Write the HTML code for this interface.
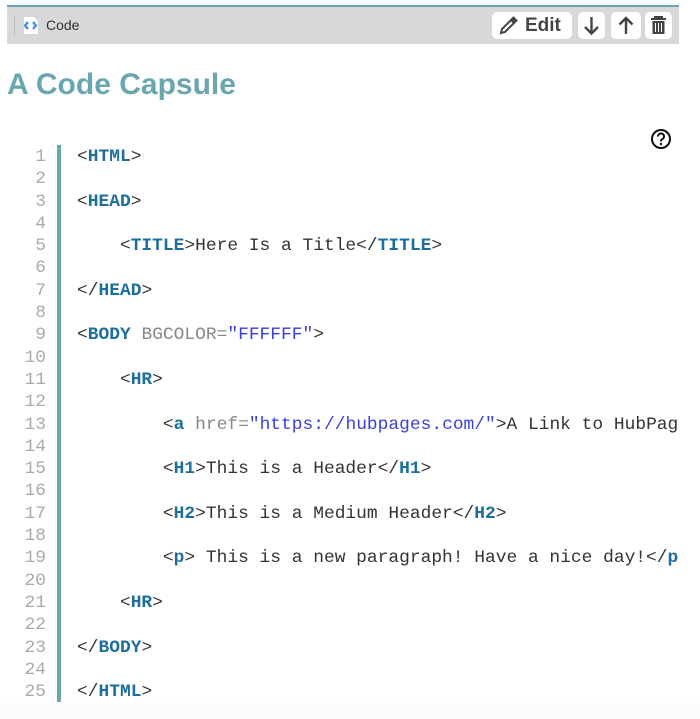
<!DOCTYPE html>
<html><head><meta charset="utf-8"><style>
body{margin:0;width:700px;height:719px;background:#fff;overflow:hidden;position:relative;font-family:"Liberation Sans",sans-serif}
.top{position:absolute;left:7px;top:5px;width:672px;height:2px;background:#6aa6b0}
.bar{position:absolute;left:7px;top:7px;width:672px;height:37px;background:#d8d8d8}
.btn{position:absolute;top:5px;height:27px;background:#fff;border-radius:5px}
h1{position:absolute;left:7px;top:68px;margin:0;font-size:30px;font-weight:bold;color:#6aa6b0}
.code{position:absolute;left:0;top:146px;width:700px;height:560px;font-family:"Liberation Mono",monospace;font-size:17.9px;line-height:22.3px;color:#333}
.ln{position:absolute;left:0;top:0;width:46px;text-align:right;color:#aaa;white-space:pre}
.tx{position:absolute;left:77px;top:0;width:602px;overflow:hidden;white-space:pre}
.t{color:#1c6f9c;font-weight:bold}.a{color:#888}.s{color:#3a3fe0}
.vl{position:absolute;left:57px;top:145px;width:4px;height:557px;background:#6aa6b0}
.fade{position:absolute;left:0;top:703px;width:700px;height:16px;background:#fbfcfc}
</style></head><body>
<div class="top"></div>
<div class="bar">
 <div style="position:absolute;left:7px;top:9px;width:1px;height:20px;background:#bbb"></div>
 <svg style="position:absolute;left:15px;top:9px" width="18" height="19" viewBox="0 0 18 19"><path d="M2 1h10l4 4v13H2z" fill="#fff"/><path d="M6 6l-3 3.5 3 3.5M11 6l3 3.5-3 3.5" stroke="#3a8fe0" stroke-width="2.2" fill="none"/></svg>
 <span style="position:absolute;left:39px;top:10px;font-size:14px;color:#333">Code</span>
 <div class="btn" style="left:485px;width:80px"><svg style="position:absolute;left:6px;top:4px" width="20" height="20" viewBox="0 0 20 20"><path d="M3 17l1-4L13 4l3 3-9 9z M14 3l1.5-1.5 3 3L17 6z" fill="none" stroke="#444" stroke-width="2"/></svg><span style="position:absolute;left:33px;top:3px;font-size:19px;font-weight:bold;color:#444">Edit</span></div>
 <div class="btn" style="left:571px;width:27px"><svg width="27" height="27" viewBox="0 0 27 27"><path d="M13.5 5v16M7 15l6.5 6.5L20 15" stroke="#444" stroke-width="2.4" fill="none"/></svg></div>
 <div class="btn" style="left:604px;width:30px"><svg width="30" height="27" viewBox="0 0 30 27"><path d="M15 22V6M8.5 12.5L15 6l6.5 6.5" stroke="#444" stroke-width="2.4" fill="none"/></svg></div>
 <div class="btn" style="left:638px;width:27px"><svg width="27" height="27" viewBox="0 0 27 27"><path d="M6 7h15M10 7V5h7v2" stroke="#444" stroke-width="2" fill="none"/><rect x="7.5" y="9" width="12" height="13" fill="#444"/><path d="M10.5 11v9M13.5 11v9M16.5 11v9" stroke="#fff" stroke-width="1"/></svg></div>
</div>
<h1>A Code Capsule</h1>
<svg style="position:absolute;left:650px;top:128px" width="22" height="22" viewBox="0 0 22 22"><circle cx="11" cy="11" r="9" fill="none" stroke="#111" stroke-width="2"/><path d="M8 8.5a3 3 0 1 1 4 2.8c-1 .4-1 1-1 2.2" fill="none" stroke="#111" stroke-width="2"/><circle cx="11" cy="16" r="1.2" fill="#111"/></svg>
<div class="fade"></div>
<div class="vl"></div>
<div class="code"><div class="ln">1
2
3
4
5
6
7
8
9
10
11
12
13
14
15
16
17
18
19
20
21
22
23
24
25</div><div class="tx">&lt;<span class="t">HTML</span>&gt;

&lt;<span class="t">HEAD</span>&gt;

    &lt;<span class="t">TITLE</span>&gt;Here Is a Title&lt;/<span class="t">TITLE</span>&gt;

&lt;/<span class="t">HEAD</span>&gt;

&lt;<span class="t">BODY</span> <span class="a">BGCOLOR=</span><span class="s">"FFFFFF"</span>&gt;

    &lt;<span class="t">HR</span>&gt;

        &lt;<span class="t">a</span> <span class="a">href=</span><span class="s">"https://hubpages.com/"</span>&gt;A Link to HubPages&lt;/<span class="t">a</span>&gt;

        &lt;<span class="t">H1</span>&gt;This is a Header&lt;/<span class="t">H1</span>&gt;

        &lt;<span class="t">H2</span>&gt;This is a Medium Header&lt;/<span class="t">H2</span>&gt;

        &lt;<span class="t">p</span>&gt; This is a new paragraph! Have a nice day!&lt;/<span class="t">p</span>&gt;

    &lt;<span class="t">HR</span>&gt;

&lt;/<span class="t">BODY</span>&gt;

&lt;/<span class="t">HTML</span>&gt;</div></div>
</body></html>
